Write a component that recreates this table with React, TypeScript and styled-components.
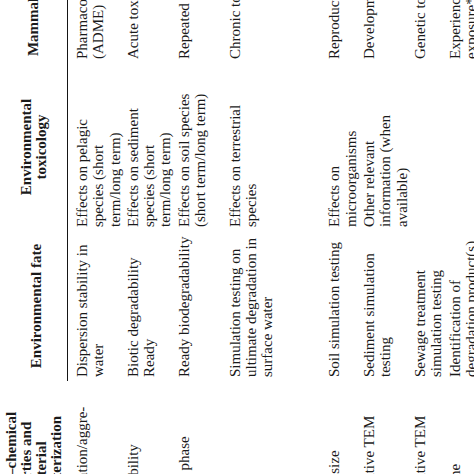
import styled, { createGlobalStyle } from "styled-components";

type Row = { min?: number; cells: string[][] };

// columns in the table's own (unrotated) order, left to right
const COLS = ["163px", "150px", "168px", "161px"];

const HEAD = [
  { lines: ["Physico–chemical", "properties and", "material", "characterization"], nudge: 12, rule: false },
  { lines: ["Environmental fate"], drop: 6, rule: true },
  { lines: ["Environmental", "toxicology"], rule: true },
  { lines: ["Mammalian toxicology"], rule: true },
];

const ROWS: Row[] = [
  {
    cells: [
      ["Agglomeration/aggre-", "gation"],
      ["Dispersion stability in", "water"],
      ["Effects on pelagic", "species (short", "term/long term)"],
      ["Pharmacokinetics", "(ADME)"],
    ],
  },
  {
    cells: [
      ["Water solubility"],
      ["Biotic degradability", "Ready"],
      ["Effects on sediment", "species (short", "term/long term)"],
      ["Acute toxicity"],
    ],
  },
  {
    min: 3,
    cells: [
      ["Crystalline phase"],
      ["Ready biodegradability"],
      ["Effects on soil species", "(short term/long term)"],
      ["Repeated dose toxicity"],
    ],
  },
  {
    min: 6,
    cells: [
      [],
      ["Simulation testing on", "ultimate degradation in", "surface water"],
      ["Effects on terrestrial", "species"],
      ["Chronic toxicity"],
    ],
  },
  {
    cells: [
      ["Crystallite size"],
      ["Soil simulation testing"],
      ["Effects on", "microorganisms"],
      ["Reproductive toxicity"],
    ],
  },
  {
    cells: [
      ["Representative TEM", "picture(s)"],
      ["Sediment simulation", "testing"],
      ["Other relevant", "information (when", "available)"],
      ["Developmental toxicity"],
    ],
  },
  {
    cells: [
      ["Representative TEM", "picture(s)"],
      ["Sewage treatment", "simulation testing"],
      [],
      ["Genetic toxicity"],
    ],
  },
  {
    cells: [
      ["Pore volume"],
      ["Identification of", "degradation product(s)"],
      [],
      ["Experience with human", "exposure*"],
    ],
  },
];

const LH = 16.3;

const Global = createGlobalStyle`
  html, body { margin: 0; padding: 0; background: #fff; }
`;

const Page = styled.div`
  width: 474px;
  height: 474px;
  overflow: hidden;
  background: #fff;
`;

// the scanned table lies on its side: built upright, then turned a quarter left
const Sheet = styled.div`
  width: 642px;
  transform-origin: 0 0;
  transform: translateY(544px) rotate(-90deg);
  font-family: "Liberation Serif", "Times New Roman", serif;
  font-size: 15px;
  line-height: ${LH}px;
  color: #1a1a1a;
`;

const HeadRow = styled.div`
  display: grid;
  grid-template-columns: ${COLS.join(" ")};
  height: 68px;
  margin-bottom: 5px;
`;

const HeadCell = styled.div<{ $drop?: number; $nudge?: number; $rule?: boolean }>`
  display: flex;
  flex-direction: column;
  justify-content: center;
  font-weight: bold;
  text-align: center;
  line-height: 15px;
  padding: ${(p) => p.$drop ?? 0}px ${(p) => 4 + (p.$nudge ?? 0)}px 0 4px;
  border-bottom: 1.6px solid ${(p) => (p.$rule ? "#151515" : "transparent")};
  white-space: nowrap;
`;

const BodyRow = styled.div<{ $min?: number }>`
  display: grid;
  grid-template-columns: ${COLS.join(" ")};
  align-items: start;
  min-height: ${(p) => (p.$min ? p.$min * LH + 2 : 0)}px;
`;

const Cell = styled.div`
  padding: 1px 4px;
  white-space: nowrap;
`;

const Line = styled.span`
  display: block;
`;

export default function App() {
  return (
    <Page>
      <Global />
      <Sheet>
        <HeadRow>
          {HEAD.map((h, i) => (
            <HeadCell key={i} $drop={h.drop} $nudge={h.nudge} $rule={h.rule}>
              {h.lines.map((l) => (
                <Line key={l}>{l}</Line>
              ))}
            </HeadCell>
          ))}
        </HeadRow>
        {ROWS.map((r, i) => (
          <BodyRow key={i} $min={r.min}>
            {r.cells.map((c, j) => (
              <Cell key={j}>
                {c.map((l) => (
                  <Line key={l}>{l}</Line>
                ))}
              </Cell>
            ))}
          </BodyRow>
        ))}
      </Sheet>
    </Page>
  );
}
